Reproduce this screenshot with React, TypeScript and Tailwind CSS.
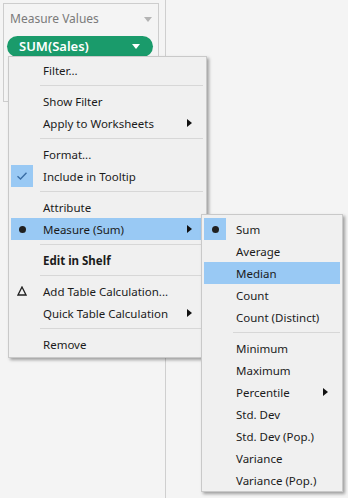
import React from 'react';

type Item =
  | { sep: true }
  | { label: string; mark?: 'check' | 'dot' | 'delta'; sub?: boolean; hot?: boolean; bold?: boolean; markHot?: boolean };

const MAIN: Item[] = [
  { label: 'Filter...' },
  { sep: true },
  { label: 'Show Filter' },
  { label: 'Apply to Worksheets', sub: true },
  { sep: true },
  { label: 'Format...' },
  { label: 'Include in Tooltip', mark: 'check', markHot: true },
  { sep: true },
  { label: 'Attribute' },
  { label: 'Measure (Sum)', mark: 'dot', sub: true, hot: true },
  { sep: true },
  { label: 'Edit in Shelf', bold: true },
  { sep: true },
  { label: 'Add Table Calculation...', mark: 'delta' },
  { label: 'Quick Table Calculation', sub: true },
  { sep: true },
  { label: 'Remove' },
];

const SUB: Item[] = [
  { label: 'Sum', mark: 'dot', markHot: true },
  { label: 'Average' },
  { label: 'Median', hot: true },
  { label: 'Count' },
  { label: 'Count (Distinct)' },
  { sep: true },
  { label: 'Minimum' },
  { label: 'Maximum' },
  { label: 'Percentile', sub: true },
  { label: 'Std. Dev' },
  { label: 'Std. Dev (Pop.)' },
  { label: 'Variance' },
  { label: 'Variance (Pop.)' },
];

function Mark({ kind }: { kind?: string }) {
  if (kind === 'check')
    return (
      <svg width="12" height="10" viewBox="0 0 12 10">
        <path d="M1.5 5.2 L4.5 8 L10.5 1.8" fill="none" stroke="#3a6ea5" strokeWidth="1.4" />
      </svg>
    );
  if (kind === 'dot') return <span className="block w-[7px] h-[7px] rounded-full bg-[#202020]" />;
  if (kind === 'delta')
    return (
      <svg width="10" height="10" viewBox="0 0 10 10">
        <path d="M5 1 L9 9 L1 9 Z" fill="none" stroke="#202020" strokeWidth="1.3" />
      </svg>
    );
  return null;
}

function Menu({ items, arrowRight }: { items: Item[]; arrowRight: number }) {
  return (
    <>
      {items.map((it, i) =>
        'sep' in it ? (
          <div key={i} className="h-[9px] flex items-center pl-[29px]">
            <div className="w-full h-px bg-[#d7d7d7]" />
          </div>
        ) : (
          <div key={i} className={`relative h-[22px] flex items-center ${it.hot ? 'bg-[#99c9f4]' : ''}`}>
            <div
              className={`w-[22px] h-[22px] flex items-center justify-center shrink-0 ${it.markHot ? 'bg-[#99c9f4]' : ''}`}
            >
              <Mark kind={it.mark} />
            </div>
            <span className={`pl-[10px] pt-[2px] text-[11.5px] text-[#1b1b1b] ${it.bold ? 'font-bold' : ''}`}>
              {it.label}
            </span>
            {it.sub && (
              <svg
                width="5"
                height="8"
                viewBox="0 0 5 8"
                className="absolute top-[7px]"
                style={{ right: arrowRight }}
              >
                <path d="M0 0 L5 4 L0 8 Z" fill="#111" />
              </svg>
            )}
          </div>
        )
      )}
    </>
  );
}

export default function App() {
  return (
    <div className="relative w-[348px] h-[498px] bg-[#f4f4f4] overflow-hidden font-['Noto_Sans',sans-serif]">
      <div className="flex h-full">
        <div className="w-[166px] h-full border-r border-[#cfcfcf] pt-[3px] pl-[3px] shrink-0">
          <div className="w-[156px] h-[99px] border border-[#cdcdcd]">
            <div className="h-[28px] flex items-center justify-between pl-[6px] pr-[6px] pt-[2px]">
              <span className="text-[12px] text-[#7a7a7a]">Measure Values</span>
              <svg width="8" height="5" viewBox="0 0 8 5">
                <path d="M0 0 L8 0 L4 5 Z" fill="#b4b4b4" />
              </svg>
            </div>
            <div className="ml-[3px] mt-[4px] w-[146px] h-[21px] rounded-full bg-[#1a9b6b] flex items-center justify-between pl-[12px] pr-[13px]">
              <span className="text-[13px] font-semibold text-white leading-none">SUM(Sales)</span>
              <svg width="8" height="5" viewBox="0 0 8 5">
                <path d="M0 0 L8 0 L4 5 Z" fill="#ffffff" />
              </svg>
            </div>
          </div>
        </div>
        <div className="flex-1" />
      </div>

      <div className="absolute left-[8px] top-[56px] w-[199px] bg-[#f0f0f0] border border-[#c9c9c9] pt-[2px] pb-[2px] pl-[2px] pr-[3px] shadow-[2px_2px_3px_rgba(0,0,0,0.35)]">
        <Menu items={MAIN} arrowRight={11} />
      </div>

      <div className="absolute left-[201px] top-[214px] w-[142px] bg-[#f0f0f0] border border-[#c9c9c9] pt-[3px] px-[2px] shadow-[2px_2px_3px_rgba(0,0,0,0.35)]">
        <Menu items={SUB} arrowRight={12} />
      </div>
    </div>
  );
}
